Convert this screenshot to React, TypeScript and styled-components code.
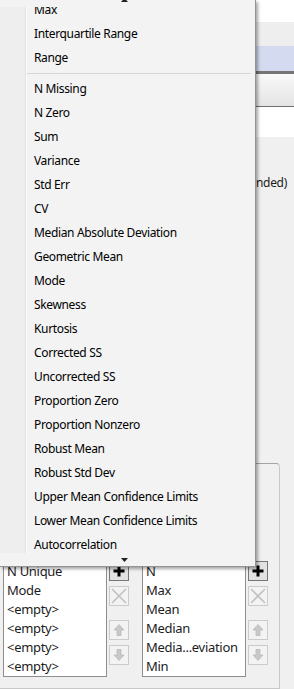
import React from 'react'
import styled, { createGlobalStyle } from 'styled-components'

const GlobalStyle = createGlobalStyle`
  html, body {
    margin: 0;
    padding: 0;
    background: #f0f0f0;
  }
  body {
    font-family: 'Noto Sans', 'Open Sans', sans-serif;
  }
`

const Stage = styled.div`
  position: relative;
  width: 294px;
  height: 689px;
  overflow: hidden;
  background: #f0f0f0;
  display: flex;
  flex-direction: column;
`

const Strip = styled.div<{ $h: number; $bg: string }>`
  flex-shrink: 0;
  height: ${(p) => p.$h}px;
  background: ${(p) => p.$bg};
`

const HeaderButton = styled.div`
  flex-shrink: 0;
  height: 32px;
  background: linear-gradient(#f9f9f9, #e4e4e4);
  border-bottom: 1px solid #6e6e6e;
`

const Panel = styled.div`
  flex: 1;
  display: flex;
  flex-direction: column;
  background: #f0f0f0;
`

const OptionRow = styled.div`
  margin-top: 39px;
  height: 14px;
  display: flex;
  justify-content: flex-end;
  padding-right: 7px;
  font-size: 12px;
  letter-spacing: -0.3px;
  line-height: 14px;
  color: #1a1a1a;
  white-space: nowrap;
`

const GroupBox = styled.div`
  margin: 273px 14px 0 -8px;
  flex: 1;
  border: 1px solid #c8c8c8;
  border-top-color: #a4a4a4;
  border-top-right-radius: 4px;
  padding: 96px 0 0 10px;
  display: flex;
`

const ListBox = styled.div`
  width: 104px;
  height: 117px;
  box-sizing: border-box;
  border: 1px solid #8e8e8e;
  background: #fff;
  padding-top: 1px;
  font-size: 13px;
  letter-spacing: -0.3px;
  color: #1c1c1c;
`

const ListRow = styled.div`
  height: 19px;
  line-height: 19px;
  padding-left: 3px;
  white-space: nowrap;
`

const ButtonColumn = styled.div<{ $after: number }>`
  margin: 0 ${(p) => p.$after}px 0 2px;
  padding-top: 1px;
  display: flex;
  flex-direction: column;
`

const ToolButton = styled.div<{ $active?: boolean; $gap?: number }>`
  width: 20px;
  height: 20px;
  box-sizing: border-box;
  margin-top: ${(p) => p.$gap ?? 0}px;
  border: 1px solid ${(p) => (p.$active ? '#767676' : '#cbcbcb')};
  background: ${(p) => (p.$active ? '#e2e2e2' : '#f3f3f3')};
  display: flex;
  align-items: center;
  justify-content: center;
`

const Menu = styled.div`
  position: absolute;
  left: 0;
  top: 0;
  width: 256px;
  height: 567px;
  box-sizing: border-box;
  background: #f3f3f3;
  border-right: 1px solid #939393;
  border-bottom: 1px solid #939393;
  box-shadow: 2px 2px 3px rgba(0, 0, 0, 0.35);
  display: flex;
  flex-direction: column;
  font-size: 12px;
  letter-spacing: -0.35px;
  color: #000;
`

const ScrollBand = styled.div<{ $h: number; $top?: boolean }>`
  flex-shrink: 0;
  height: ${(p) => p.$h}px;
  overflow: hidden;
  display: flex;
  justify-content: center;
  align-items: ${(p) => (p.$top ? 'flex-start' : 'center')};
  padding-right: 6px;
  svg {
    margin-top: ${(p) => (p.$top ? -2 : 0)}px;
  }
`

const ItemViewport = styled.div`
  flex: 1;
  overflow: hidden;
  background: linear-gradient(
    to right,
    #eeeeee 0,
    #eeeeee 25px,
    #e1e1e1 25px,
    #e1e1e1 26px,
    #fcfcfc 26px,
    #fcfcfc 27px,
    #f3f3f3 27px
  );
`

const ItemList = styled.div`
  margin-top: -9px;
`

const MenuItem = styled.div`
  height: 24px;
  line-height: 24px;
  padding-left: 34px;
  white-space: nowrap;
`

const Separator = styled.div`
  height: 7px;
  display: flex;
  align-items: center;
  padding: 0 4px 0 27px;
  &::after {
    content: '';
    flex: 1;
    height: 1px;
    background: #d6d6d6;
  }
`

const beforeSep = ['Max', 'Interquartile Range', 'Range']
const afterSep = [
  'N Missing',
  'N Zero',
  'Sum',
  'Variance',
  'Std Err',
  'CV',
  'Median Absolute Deviation',
  'Geometric Mean',
  'Mode',
  'Skewness',
  'Kurtosis',
  'Corrected SS',
  'Uncorrected SS',
  'Proportion Zero',
  'Proportion Nonzero',
  'Robust Mean',
  'Robust Std Dev',
  'Upper Mean Confidence Limits',
  'Lower Mean Confidence Limits',
  'Autocorrelation',
]

const leftItems = ['N Unique', 'Mode', '<empty>', '<empty>', '<empty>', '<empty>']
const rightItems = ['N', 'Max', 'Mean', 'Median', 'Media...eviation', 'Min']

const Arrow = ({ up }: { up?: boolean }) => (
  <svg width="7" height="4" viewBox="0 0 7 4">
    <path d={up ? 'M0 4 L3.5 0 L7 4 Z' : 'M0 0 L7 0 L3.5 4 Z'} fill="#222" />
  </svg>
)

const PlusIcon = () => (
  <svg width="18" height="18" viewBox="0 0 18 18">
    <path d="M3.5 7.5 H14.5 V10.5 H3.5 Z M7.5 3.5 H10.5 V14.5 H7.5 Z" fill="#000" />
  </svg>
)

const CrossIcon = () => (
  <svg width="18" height="18" viewBox="0 0 18 18">
    <path d="M2 2 L16 16 M16 2 L2 16" stroke="#c2c2c2" strokeWidth="1.7" />
  </svg>
)

const MoveIcon = ({ down }: { down?: boolean }) => (
  <svg width="18" height="18" viewBox="0 0 18 18">
    <path
      d={
        down
          ? 'M7 3.5 H11 V9 H14 L9 14.5 L4 9 H7 Z'
          : 'M9 3.5 L14 9 H11 V14.5 H7 V9 H4 Z'
      }
      fill="#c9c9c9"
      stroke="#b9b9b9"
      strokeWidth="0.8"
    />
  </svg>
)

const Buttons = ({ after }: { after: number }) => (
  <ButtonColumn $after={after}>
    <ToolButton $active>
      <PlusIcon />
    </ToolButton>
    <ToolButton $gap={5}>
      <CrossIcon />
    </ToolButton>
    <ToolButton $gap={14}>
      <MoveIcon />
    </ToolButton>
    <ToolButton $gap={5}>
      <MoveIcon down />
    </ToolButton>
  </ButtonColumn>
)

const App: React.FC = () => {
  return (
    <>
      <GlobalStyle />
      <Stage>
        <Strip $h={22} $bg="#ffffff" />
        <Strip $h={24} $bg="#eeeeee" />
        <Strip $h={25} $bg="#d4daef" />
        <Strip $h={3} $bg="#757575" />
        <HeaderButton />
        <Strip $h={30} $bg="#ffffff" />
        <Panel>
          <OptionRow>Column names (Expanded)</OptionRow>
          <GroupBox>
            <ListBox>
              {leftItems.map((item, i) => (
                <ListRow key={`l${i}`}>{item}</ListRow>
              ))}
            </ListBox>
            <Buttons after={13} />
            <ListBox>
              {rightItems.map((item, i) => (
                <ListRow key={`r${i}`}>{item}</ListRow>
              ))}
            </ListBox>
            <Buttons after={0} />
          </GroupBox>
        </Panel>

        <Menu>
          <ScrollBand $h={7} $top>
            <Arrow up />
          </ScrollBand>
          <ItemViewport>
            <ItemList>
              {beforeSep.map((item) => (
                <MenuItem key={item}>{item}</MenuItem>
              ))}
              <Separator />
              {afterSep.map((item) => (
                <MenuItem key={item}>{item}</MenuItem>
              ))}
            </ItemList>
          </ItemViewport>
          <ScrollBand $h={13}>
            <Arrow />
          </ScrollBand>
        </Menu>
      </Stage>
    </>
  )
}

export default App
